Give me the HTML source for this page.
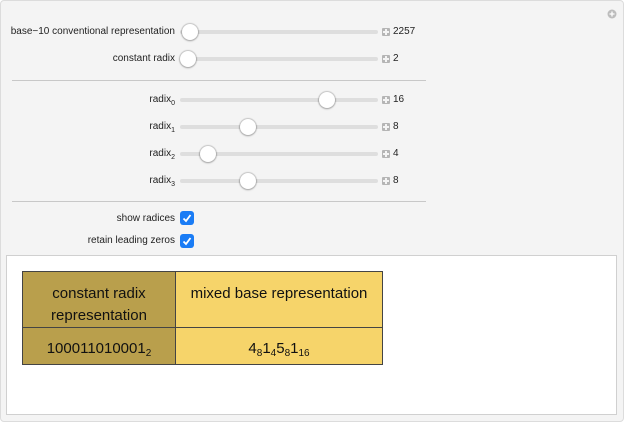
<!DOCTYPE html>
<html><head><style>
body{margin:0;width:624px;height:422px;background:#fff;font-family:"Liberation Sans",sans-serif;position:relative;overflow:hidden}
.panel{position:absolute;left:0;top:0;width:622px;height:420px;background:#f4f4f4;border:1px solid #dcdcdc;border-radius:4px}
.lbl{position:absolute;right:449px;font-size:10px;color:#222;text-align:right;white-space:nowrap}
.track{position:absolute;left:180px;width:198px;height:4px;background:#dedede;border-radius:2px}
.thumb{position:absolute;width:16px;height:16px;border-radius:50%;background:#fff;box-shadow:0 0 1px 1px rgba(0,0,0,.18),0 1px 2px rgba(0,0,0,.2)}
.plus{position:absolute;left:382px;width:8px;height:8px;background:#b5b5b5;border-radius:1px}
.plus:before{content:"";position:absolute;left:3px;top:1px;width:2px;height:6px;background:#f4f4f4}
.plus:after{content:"";position:absolute;left:1px;top:3px;width:6px;height:2px;background:#f4f4f4}
.val{position:absolute;left:393px;font-size:10px;color:#222}
.hr{position:absolute;left:12px;width:414px;height:1px;background:#c8c8c8}
.cb{position:absolute;left:180px;width:14px;height:14px;background:#1a7cf5;border-radius:3px}
.out{position:absolute;left:6px;top:255px;width:609px;height:158px;background:#fff;border:1px solid #d0d0d0}
table{position:absolute;left:22px;top:271px;border-collapse:collapse;font-size:15px;color:#111}
td{border:1px solid #444;text-align:center;padding:0}
sub{font-size:10px;vertical-align:-3px}
</style></head><body>
<div class="panel"></div>
<svg style="position:absolute;left:607px;top:9px" width="10" height="10"><circle cx="5" cy="5" r="4.5" fill="#bdbdbd"/><path d="M5 2.5v5M2.5 5h5" stroke="#fff" stroke-width="1.3"/></svg>

<div class="lbl" style="top:26px">base−10 conventional representation</div>
<div class="track" style="top:30px"></div><div class="thumb" style="left:182px;top:24px"></div>
<div class="plus" style="top:28px"></div><div class="val" style="top:26px">2257</div>

<div class="lbl" style="top:53px">constant radix</div>
<div class="track" style="top:57px"></div><div class="thumb" style="left:180px;top:51px"></div>
<div class="plus" style="top:55px"></div><div class="val" style="top:53px">2</div>

<div class="hr" style="top:80px"></div>

<div class="lbl" style="top:94px">radix<sub style="font-size:7px">0</sub></div>
<div class="track" style="top:98px"></div><div class="thumb" style="left:319px;top:92px"></div>
<div class="plus" style="top:96px"></div><div class="val" style="top:94px">16</div>

<div class="lbl" style="top:121px">radix<sub style="font-size:7px">1</sub></div>
<div class="track" style="top:125px"></div><div class="thumb" style="left:240px;top:119px"></div>
<div class="plus" style="top:123px"></div><div class="val" style="top:121px">8</div>

<div class="lbl" style="top:148px">radix<sub style="font-size:7px">2</sub></div>
<div class="track" style="top:152px"></div><div class="thumb" style="left:200px;top:146px"></div>
<div class="plus" style="top:150px"></div><div class="val" style="top:148px">4</div>

<div class="lbl" style="top:175px">radix<sub style="font-size:7px">3</sub></div>
<div class="track" style="top:179px"></div><div class="thumb" style="left:240px;top:173px"></div>
<div class="plus" style="top:177px"></div><div class="val" style="top:175px">8</div>

<div class="hr" style="top:201px"></div>

<div class="lbl" style="top:213px">show radices</div>
<div class="cb" style="top:211px"><svg width="14" height="14"><path d="M3.5 7.5l2.5 2.5 4.5-6" stroke="#fff" stroke-width="1.8" fill="none"/></svg></div>
<div class="lbl" style="top:235px">retain leading zeros</div>
<div class="cb" style="top:234px"><svg width="14" height="14"><path d="M3.5 7.5l2.5 2.5 4.5-6" stroke="#fff" stroke-width="1.8" fill="none"/></svg></div>

<div class="out"></div>
<table>
<tr style="height:56px"><td style="width:153px;background:#b99f4c;line-height:22px;vertical-align:top;padding-top:11px;box-sizing:border-box">constant radix<br>representation</td><td style="width:206px;background:#f6d46a;vertical-align:top;padding-top:13px">mixed base representation</td></tr>
<tr style="height:37px"><td style="background:#b99f4c;padding-top:6px">100011010001<sub>2</sub></td><td style="background:#f6d46a;padding-top:6px">4<sub>8</sub>1<sub>4</sub>5<sub>8</sub>1<sub>16</sub></td></tr>
</table>
</body></html>
